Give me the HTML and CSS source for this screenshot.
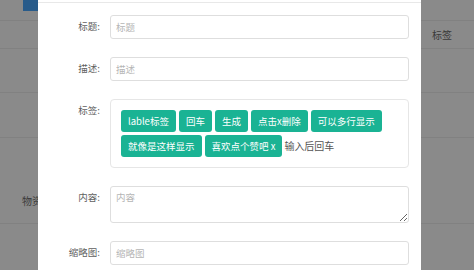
FILE: index.html
```html
<!DOCTYPE html>
<html lang="zh">
<head>
<meta charset="utf-8">
<link rel="stylesheet" href="styles.css">
</head>
<body>
<div class="page">
  <div class="btn-blue"></div>
  <div class="table">
    <div class="tr tr-head"><div class="td-main"></div><div class="td-side">标签</div></div>
    <div class="tr tr-a"></div>
    <div class="tr tr-b"></div>
    <div class="tr tr-c"><div class="td-left">物资</div></div>
    <div class="tr tr-d"></div>
  </div>
</div>
<div class="modal">
  <div class="modal-header"></div>
  <div class="modal-body">
    <div class="form-group">
      <label class="lbl">标题:</label>
      <input class="ctrl" type="text" placeholder="标题">
    </div>
    <div class="form-group">
      <label class="lbl">描述:</label>
      <input class="ctrl" type="text" placeholder="描述">
    </div>
    <div class="form-group">
      <label class="lbl">标签:</label>
      <div class="tags">
        <span class="tag">lable标签</span>
        <span class="tag">回车</span>
        <span class="tag">生成</span>
        <span class="tag">点击x删除</span>
        <span class="tag">可以多行显示</span>
        <span class="tag">就像是这样显示</span>
        <span class="tag">喜欢点个赞吧 x</span>
        <span class="tag-input">输入后回车</span>
      </div>
    </div>
    <div class="form-group">
      <label class="lbl">内容:</label>
      <textarea class="ctrl area" placeholder="内容"></textarea>
    </div>
    <div class="form-group">
      <label class="lbl">缩略图:</label>
      <input class="ctrl" type="text" placeholder="缩略图">
    </div>
  </div>
</div>
</body>
</html>
```
FILE: styles.css
```css
html, body {
  margin: 0;
  padding: 0;
}
body {
  width: 474px;
  height: 270px;
  overflow: hidden;
  position: relative;
  background: #8a8a8a;
  font-family: "Noto Sans CJK SC", "Noto Sans", sans-serif;
}
.page {
  width: 474px;
}
.btn-blue {
  margin-left: 23px;
  width: 40px;
  height: 11px;
  background: #285b8a;
}
.table {
  margin-top: 9px;
}
.tr {
  border-top: 1px solid #818181;
  display: flex;
}
.tr-head { height: 27px; }
.tr-a { height: 43px; }
.tr-b { height: 44px; }
.tr-c { height: 85px; }
.tr-d { height: 50px; }
.td-main { width: 432px; }
.td-side {
  font-size: 10px;
  color: #3a3a3a;
  line-height: 28px;
}
.td-left {
  padding-left: 22px;
  padding-top: 55px;
  font-size: 10px;
  color: #3a3a3a;
}
.modal {
  position: absolute;
  left: 38px;
  top: 0;
  width: 383px;
  height: 280px;
  background: #fff;
}
.modal-header {
  height: 2px;
  border-bottom: 1px solid #e8e8e8;
}
.modal-body {
  padding: 12px 12px 0 0;
}
.form-group {
  display: grid;
  grid-template-columns: 62px 299px;
  column-gap: 10px;
  margin-bottom: 18px;
  align-items: start;
}
.lbl {
  text-align: right;
  font-size: 9.5px;
  line-height: 12px;
  padding-top: 5px;
  color: #606060;
}
.ctrl {
  box-sizing: border-box;
  width: 299px;
  height: 24px;
  margin: 0;
  border: 1px solid #dedede;
  border-radius: 3px;
  padding: 0 5px;
  font-family: "Noto Sans CJK SC", "Noto Sans", sans-serif;
  font-size: 9.5px;
  color: #555;
  background: #fff;
  outline: none;
}
.ctrl::placeholder {
  color: #b5b5b5;
}
.area {
  height: 37px;
  padding: 3px 5px;
  resize: vertical;
  display: block;
}
.tags {
  box-sizing: border-box;
  width: 299px;
  border: 1px solid #e6e6e6;
  border-radius: 4px;
  padding: 10px;
  display: flex;
  flex-wrap: wrap;
  gap: 3px 3px;
  align-items: center;
}
.tag {
  height: 22px;
  line-height: 22px;
  padding: 0 7px;
  background: #1ab394;
  color: #fff;
  font-size: 9.5px;
  border-radius: 3px;
  white-space: nowrap;
}
.tag-input {
  font-size: 10px;
  color: #555;
  line-height: 22px;
  margin-left: -1px;
}
```
